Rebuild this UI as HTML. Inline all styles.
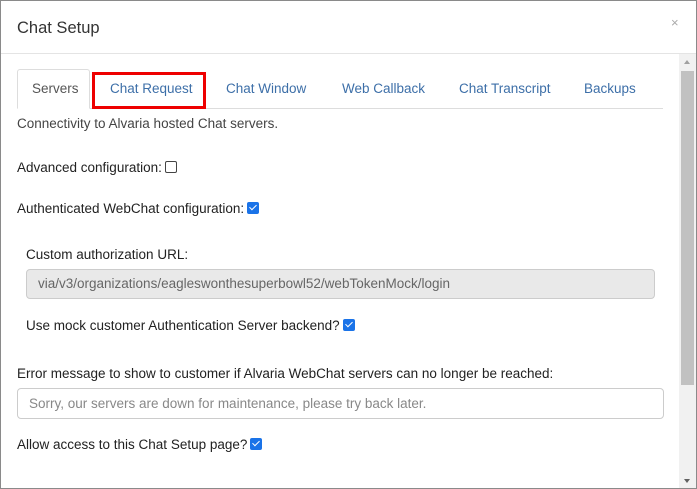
<!DOCTYPE html>
<html><head><style>
body{margin:0;width:697px;height:489px;background:#fff;font-family:"Liberation Sans",sans-serif;position:relative;overflow:hidden;color:#222}
.a{position:absolute;white-space:nowrap}
.frame{position:absolute;left:0;top:0;width:695px;height:487px;border:1px solid #8a8a8a}
.t{font-size:13.5px;color:#3d6fa8}
.l{font-size:13.5px;color:#222}
.cb{display:inline-block;width:12px;height:12px;border-radius:2px;vertical-align:-1px;margin-left:3px;box-sizing:border-box}
.on{background:#1a73e8;position:relative}
.on:after{content:"";position:absolute;left:4px;top:1px;width:3px;height:6px;border:solid #fff;border-width:0 1.7px 1.7px 0;transform:rotate(45deg)}
.off{border:1px solid #444;background:#fff}
</style></head><body>
<div class="frame"></div>
<div class="a" style="left:17px;top:19px;font-size:16.5px;color:#333">Chat Setup</div>
<div class="a" style="left:671px;top:15px;font-size:13px;color:#aaa">×</div>
<div class="a" style="left:1px;top:53px;width:695px;height:1px;background:#e4e4e4"></div>
<div class="a" style="left:679px;top:54px;width:17px;height:434px;background:#f1f1f1"></div>
<div class="a" style="left:681px;top:71px;width:13px;height:314px;background:#c1c1c1"></div>
<div class="a" style="left:684px;top:60px;width:0;height:0;border:3.5px solid transparent;border-bottom:4px solid #a0a0a0;border-top:0"></div>
<div class="a" style="left:684px;top:479px;width:0;height:0;border:3.5px solid transparent;border-top:4px solid #606060;border-bottom:0"></div>
<div class="a" style="left:17px;top:108px;width:646px;height:1px;background:#ddd"></div>
<div class="a" style="left:17px;top:69px;width:73px;height:40px;border:1px solid #ddd;border-bottom:1px solid #fff;border-radius:3px 3px 0 0;box-sizing:border-box;background:#fff"></div>
<div class="a" style="left:32px;top:81px;font-size:13.5px;color:#555">Servers</div>
<div class="a" style="left:92px;top:72px;width:114px;height:37px;border:3px solid #e00;box-sizing:border-box"></div>
<div class="a t" style="left:110px;top:81px">Chat Request</div>
<div class="a t" style="left:226px;top:81px">Chat Window</div>
<div class="a t" style="left:342px;top:81px">Web Callback</div>
<div class="a t" style="left:459px;top:81px">Chat Transcript</div>
<div class="a t" style="left:584px;top:81px">Backups</div>
<div class="a" style="left:17px;top:116px;font-size:13.5px;color:#444">Connectivity to Alvaria hosted Chat servers.</div>
<div class="a l" style="left:17px;top:160px">Advanced configuration:<span class="cb off"></span></div>
<div class="a l" style="left:17px;top:201px">Authenticated WebChat configuration:<span class="cb on"></span></div>
<div class="a l" style="left:26px;top:247px">Custom authorization URL:</div>
<div class="a" style="left:26px;top:269px;width:629px;height:30px;background:#e9e9e9;border:1px solid #ccc;border-radius:4px;box-sizing:border-box"></div>
<div class="a" style="left:38px;top:276px;font-size:13.5px;color:#666">via/v3/organizations/eagleswonthesuperbowl52/webTokenMock/login</div>
<div class="a l" style="left:26px;top:318px">Use mock customer Authentication Server backend?<span class="cb on"></span></div>
<div class="a l" style="left:17px;top:366px">Error message to show to customer if Alvaria WebChat servers can no longer be reached:</div>
<div class="a" style="left:17px;top:388px;width:647px;height:31px;background:#fff;border:1px solid #ccc;border-radius:4px;box-sizing:border-box"></div>
<div class="a" style="left:29px;top:396px;font-size:13.5px;color:#888">Sorry, our servers are down for maintenance, please try back later.</div>
<div class="a l" style="left:17px;top:437px">Allow access to this Chat Setup page?<span class="cb on"></span></div>
</body></html>
